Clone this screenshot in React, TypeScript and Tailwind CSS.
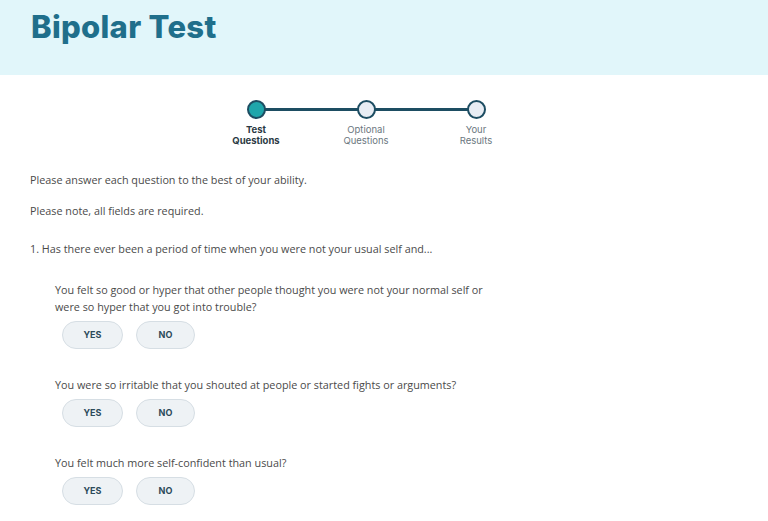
export default function App() {
  const steps = [
    { label: ["Test", "Questions"], active: true },
    { label: ["Optional", "Questions"], active: false },
    { label: ["Your", "Results"], active: false },
  ]

  const questions = [
    ["You felt so good or hyper that other people thought you were not your normal self or", "were so hyper that you got into trouble?"],
    ["You were so irritable that you shouted at people or started fights or arguments?"],
    ["You felt much more self-confident than usual?"],
  ]

  return (
    <div className="min-h-[521px] bg-white" style={{ fontFamily: '"Open Sans", "Noto Sans", sans-serif' }}>
      <header className="h-[75px] bg-[#e1f6fa] pl-[31px] pt-[7px]">
        <h1
          className="text-[31px] font-extrabold leading-[40px] text-[#1f6f8b] tracking-[0.3px]"
          style={{ fontFamily: 'Inter, "Open Sans", sans-serif' }}
        >
          Bipolar Test
        </h1>
      </header>

      <div className="ml-[201px] mt-[25px] flex w-[330px]">
        {steps.map((s, i) => (
          <div key={i} className="flex w-[110px] flex-col items-center">
            <div className="relative flex h-[19px] w-full items-center justify-center">
              {i > 0 && <div className="absolute left-0 top-[8px] h-[3px] w-1/2 bg-[#1d4d62]" />}
              {i < steps.length - 1 && <div className="absolute right-0 top-[8px] h-[3px] w-1/2 bg-[#1d4d62]" />}
              <div
                className={`relative h-[19px] w-[19px] rounded-full border-[2.5px] border-[#1d4d62] ${
                  s.active ? "bg-[#1fa6ab]" : "bg-[#e8edf4]"
                }`}
              />
            </div>
            <div
              className={`mt-[5px] text-center text-[9.5px] leading-[11px] ${
                s.active ? "font-bold text-[#2b3a44]" : "text-[#6b7780]"
              }`}
              style={{ fontFamily: 'Inter, "Open Sans", sans-serif' }}
            >
              {s.label[0]}
              <br />
              {s.label[1]}
            </div>
          </div>
        ))}
      </div>

      <div className="pl-[30px] pt-[25px] text-[10.8px] text-[#4a4a4a]">
        <p className="leading-[17px]">Please answer each question to the best of your ability.</p>
        <p className="mt-[14px] leading-[17px]">Please note, all fields are required.</p>
        <p className="mt-[21px] leading-[17px]">1. Has there ever been a period of time when you were not your usual self and...</p>

        <div className="ml-[25px] mt-[24px] flex flex-col gap-[27px]">
          {questions.map((q, i) => (
            <div key={i}>
              <p className="leading-[17px]">
                {q.map((line, j) => (
                  <span key={j}>
                    {line}
                    {j < q.length - 1 && <br />}
                  </span>
                ))}
              </p>
              <div className="ml-[7px] mt-[6px] flex gap-[13px]">
                {["YES", "NO"].map((b) => (
                  <button
                    key={b}
                    className={`h-[28px] rounded-full border border-[#d6dee4] bg-[#eef2f5] text-[9px] font-bold text-[#2c4a5a] ${
                      b === "YES" ? "w-[61px]" : "w-[59px]"
                    }`}
                    style={{ fontFamily: 'Inter, "Open Sans", sans-serif' }}
                  >
                    {b}
                  </button>
                ))}
              </div>
            </div>
          ))}
        </div>
      </div>
    </div>
  )
}
